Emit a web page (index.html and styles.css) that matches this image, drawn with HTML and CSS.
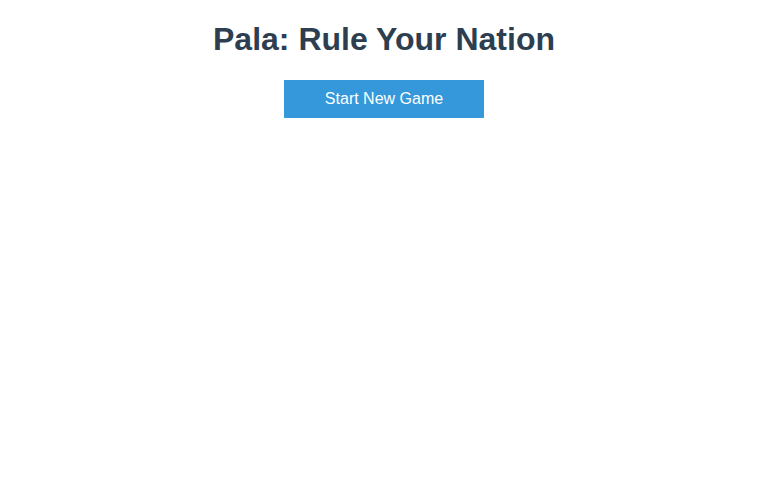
FILE: index.html
```html
<!DOCTYPE html>
<html lang="en">
<head>
    <meta charset="UTF-8">
    <meta name="viewport" content="width=device-width, initial-scale=1.0">
    <title>Pala: Rule Your Nation</title>
    <link rel="stylesheet" href="styles.css">
</head>
<body>
    <div class="game-container">
        <h1 class="title">Pala: Rule Your Nation</h1>

        <!-- start screen -->
        <div class="start-screen">
            <button class="start-btn" onclick="startGame()">Start New Game</button>
        </div>
    </div>
    <script>
        function startGame() {
            // new game setup goes here
        }
    </script>
</body>
</html>
```

FILE: styles.css
```css
body {
    font-family: Arial, "Liberation Sans", sans-serif;
    margin: 0;
    background-color: #ffffff;
    color: #2c3e50;
}
.game-container {
    padding: 21px 20px 20px;
    text-align: center;
}
.title {
    font-size: 32px;
    margin: 0 0 22px;
    color: #2c3e50;
}
.start-screen {
    display: flex;
    justify-content: center;
}
.start-btn {
    width: 200px;
    padding: 10px 20px;
    font-family: Arial, "Liberation Sans", sans-serif;
    font-size: 16px;
    background-color: #3498db;
    color: white;
    border: none;
    cursor: pointer;
}
```
